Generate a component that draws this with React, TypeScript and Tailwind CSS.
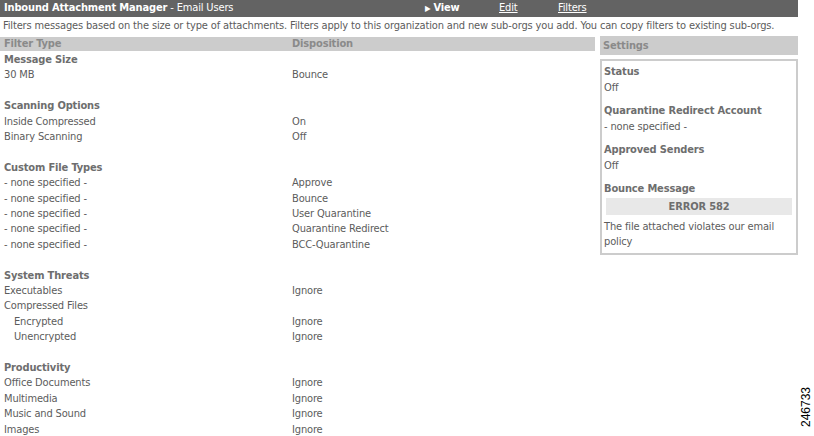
import React from "react";

type Row = { label: string; value?: string; indent?: boolean };
type Section = { title: string; rows: Row[] };

const sections: Section[] = [
	{ title: "Message Size", rows: [{ label: "30 MB", value: "Bounce" }] },
	{
		title: "Scanning Options",
		rows: [
			{ label: "Inside Compressed", value: "On" },
			{ label: "Binary Scanning", value: "Off" },
		],
	},
	{
		title: "Custom File Types",
		rows: [
			{ label: "- none specified -", value: "Approve" },
			{ label: "- none specified -", value: "Bounce" },
			{ label: "- none specified -", value: "User Quarantine" },
			{ label: "- none specified -", value: "Quarantine Redirect" },
			{ label: "- none specified -", value: "BCC-Quarantine" },
		],
	},
	{
		title: "System Threats",
		rows: [
			{ label: "Executables", value: "Ignore" },
			{ label: "Compressed Files" },
			{ label: "Encrypted", value: "Ignore", indent: true },
			{ label: "Unencrypted", value: "Ignore", indent: true },
		],
	},
	{
		title: "Productivity",
		rows: [
			{ label: "Office Documents", value: "Ignore" },
			{ label: "Multimedia", value: "Ignore" },
			{ label: "Music and Sound", value: "Ignore" },
			{ label: "Images", value: "Ignore" },
		],
	},
];

const settings = [
	{ label: "Status", value: "Off" },
	{ label: "Quarantine Redirect Account", value: "- none specified -" },
	{ label: "Approved Senders", value: "Off" },
];

export default function App() {
	return (
		<div
			className="relative w-[814px] h-[436px] overflow-hidden bg-white text-[11px] tracking-[-0.15px] text-[#5c5c5c]"
			style={{ fontFamily: '"DejaVu Sans Condensed", "DejaVu Sans", Verdana, sans-serif', fontStretch: "condensed" }}
		>
			{/* title bar */}
			<div className="flex items-center h-[17px] w-[798px] bg-[#636363] text-white">
				<div className="w-[425px] pl-1">
					<span className="font-bold">Inbound Attachment Manager</span> - Email Users
				</div>
				<div className="flex items-center w-[74px] font-bold">
					<span className="text-[8px] mr-[3px]">&#9654;</span>View
				</div>
				<a className="w-[59px] underline">Edit</a>
				<a className="underline">Filters</a>
			</div>

			<div className="pl-[3px] h-[17px] leading-[17px] whitespace-nowrap">
				Filters messages based on the size or type of attachments. Filters apply to this organization and
				new sub-orgs you add. You can copy filters to existing sub-orgs.
			</div>

			<div className="flex mt-[2px]">
				{/* filter table */}
				<div className="w-[595px]">
					<div className="flex h-[14px] leading-[14px] mt-[1px] bg-[#cccccc] text-[#8a8a8a] font-bold">
						<div className="w-[292px] pl-1">Filter Type</div>
						<div>Disposition</div>
					</div>
					<div className="pt-[1px] leading-[15.4px]">
						{sections.map((s) => (
							<div key={s.title} className="mb-[15.4px]">
								<div className="pl-1 font-bold text-[#6e6e6e]">{s.title}</div>
								{s.rows.map((r, i) => (
									<div key={i} className="flex">
										<div className={`w-[292px] ${r.indent ? "pl-[14px]" : "pl-1"}`}>{r.label}</div>
										<div>{r.value}</div>
									</div>
								))}
							</div>
						))}
					</div>
				</div>

				{/* settings panel */}
				<div className="ml-[5px] w-[198px]">
					<div className="h-[19px] leading-[19px] pl-[3px] bg-[#cccccc] text-[#8a8a8a] font-bold">
						Settings
					</div>
					<div className="mt-[4px] border-2 border-[#cccccc] px-[2px] pt-[3px] pb-[3px] leading-[15.5px]">
						{settings.map((s) => (
							<div key={s.label} className="mb-[8px]">
								<div className="font-bold text-[#6e6e6e]">{s.label}</div>
								<div>{s.value}</div>
							</div>
						))}
						<div className="font-bold text-[#6e6e6e]">Bounce Message</div>
						<div className="mt-[1px] mx-[2px] h-[17px] leading-[17px] bg-[#e8e8e8] text-center font-bold text-[#6e6e6e]">
							ERROR 582
						</div>
						<div className="mt-[4px]">The file attached violates our email policy</div>
					</div>
				</div>
			</div>

			<div
				className="absolute left-[799px] top-[384px] w-[14px] h-[45px] flex items-center justify-center"
			>
				<span
					className="-rotate-90 text-[12px] tracking-normal text-black whitespace-nowrap"
					style={{ fontFamily: '"Liberation Sans", Arial, sans-serif', fontStretch: "normal" }}
				>
					246733
				</span>
			</div>
		</div>
	);
}
